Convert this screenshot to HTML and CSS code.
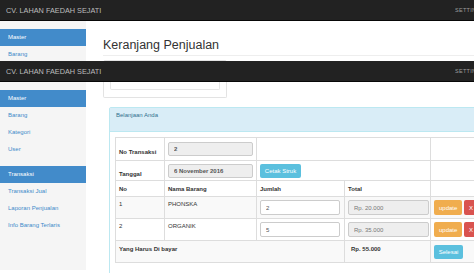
FILE: index.html
```html
<!DOCTYPE html>
<html lang="id">
<head>
    <meta charset="UTF-8">
    <meta name="viewport" content="width=device-width, initial-scale=1.0">
    <title>Keranjang Penjualan</title>
    <link rel="stylesheet" href="styles.css">
</head>
<body>

    <!-- upper strip (page before scroll) -->
    <div class="frame frame-top">
        <nav class="navbar">
            <span class="brand">CV. LAHAN FAEDAH SEJATI</span>
            <span class="nav-right">SETTINGS</span>
        </nav>
        <div class="layout">
            <aside class="sidebar">
                <ul class="nav-list">
                    <li class="active">Master</li>
                    <li>Barang</li>
                    <li>Kategori</li>
                    <li>User</li>
                </ul>
            </aside>
            <main class="content">
                <h1 class="page-header">Keranjang Penjualan</h1>
                <div class="outer-box">
                    <div class="inner-box"></div>
                </div>
            </main>
        </div>
    </div>

    <!-- lower part -->
    <div class="frame frame-bottom">
        <nav class="navbar">
            <span class="brand">CV. LAHAN FAEDAH SEJATI</span>
            <span class="nav-right">SETTINGS</span>
        </nav>
        <div class="layout">
            <aside class="sidebar">
                <ul class="nav-list">
                    <li class="active">Master</li>
                    <li>Barang</li>
                    <li>Kategori</li>
                    <li>User</li>
                </ul>
                <ul class="nav-list">
                    <li class="active">Transaksi</li>
                    <li>Transaksi Jual</li>
                    <li>Laporan Penjualan</li>
                    <li>Info Barang Terlaris</li>
                </ul>
            </aside>
            <main class="content">
                <div class="outer-box cut">
                    <div class="inner-box"></div>
                </div>

                <div class="panel">
                    <div class="panel-heading">Belanjaan Anda</div>
                    <div class="panel-body">
                        <table class="cart">
                            <colgroup>
                                <col style="width:49px">
                                <col style="width:92px">
                                <col style="width:88px">
                                <col style="width:86px">
                                <col style="width:60px">
                            </colgroup>
                            <tr class="r-no">
                                <th>No Transaksi</th>
                                <td><input class="field ro strong" type="text" value="2" readonly></td>
                                <td colspan="2" class="no-left"></td>
                                <td></td>
                            </tr>
                            <tr class="r-tgl">
                                <th>Tanggal</th>
                                <td><input class="field ro strong" type="text" value="6 November 2016" readonly></td>
                                <td colspan="2" class="no-left"><button class="btn btn-info btn-cetak">Cetak Struk</button></td>
                                <td></td>
                            </tr>
                            <tr class="r-head">
                                <th>No</th>
                                <th>Nama Barang</th>
                                <th>Jumlah</th>
                                <th>Total</th>
                                <th></th>
                            </tr>
                            <tr class="r-item stripe">
                                <td>1</td>
                                <td>PHONSKA</td>
                                <td><input class="field qty" type="text" value="2"></td>
                                <td><input class="field ro total" type="text" value="Rp. 20.000" readonly></td>
                                <td class="actions"><button class="btn btn-warning">update</button><button class="btn btn-danger">X</button></td>
                            </tr>
                            <tr class="r-item r-item2">
                                <td>2</td>
                                <td>ORGANIK</td>
                                <td><input class="field qty" type="text" value="5"></td>
                                <td><input class="field ro total" type="text" value="Rp. 35.000" readonly></td>
                                <td class="actions"><button class="btn btn-warning">update</button><button class="btn btn-danger">X</button></td>
                            </tr>
                            <tr class="r-foot stripe">
                                <th colspan="3">Yang Harus Di bayar</th>
                                <th class="grand">Rp. 55.000</th>
                                <td class="actions"><button class="btn btn-info btn-done">Selesai</button></td>
                            </tr>
                        </table>
                    </div>
                </div>
            </main>
        </div>
    </div>

</body>
</html>
```

FILE: styles.css
```css
* {
    margin: 0;
    padding: 0;
    box-sizing: border-box;
}

body {
    font-family: "Liberation Sans", Arial, sans-serif;
    font-size: 6px;
    color: #333;
    background: #fff;
    width: 474px;
    height: 273px;
    overflow: hidden;
}

.frame-top {
    height: 61px;
    overflow: hidden;
}

.navbar {
    display: flex;
    align-items: center;
    height: 21px;
    background: #222;
    border-bottom: 1px solid #080808;
    padding-left: 6px;
    overflow: hidden;
}

.brand {
    font-size: 7.3px;
    color: #bcbcbc;
    white-space: nowrap;
}

.nav-right {
    margin-left: auto;
    width: 19px;
    overflow: hidden;
    white-space: nowrap;
    font-size: 5.5px;
    color: #9d9d9d;
    letter-spacing: 0.3px;
}

.layout {
    display: flex;
}

.sidebar {
    width: 86px;
    flex-shrink: 0;
    background: #f5f5f5;
    padding-top: 8px;
}

.frame-bottom .sidebar {
    height: 188px;
}

.nav-list {
    list-style: none;
    margin-bottom: 8px;
}

.nav-list li {
    height: 17px;
    line-height: 17px;
    padding-left: 8px;
    color: #428bca;
    white-space: nowrap;
}

.nav-list li.active {
    background: #428bca;
    color: #fff;
}

.content {
    flex: 1;
    min-width: 0;
    padding-left: 17px;
}

.page-header {
    font-size: 12.5px;
    font-weight: normal;
    line-height: 14px;
    margin-top: 17px;
    padding-bottom: 3px;
    border-bottom: 1px solid #eee;
}

.outer-box {
    width: 124px;
    margin-top: 4px;
    padding: 6px;
    border: 1px solid #e3e3e3;
    border-radius: 2px;
}

.inner-box {
    height: 30px;
    border: 1px solid #e6e6e6;
    border-radius: 2px;
}

.outer-box.cut {
    margin-top: 0;
    height: 16px;
    padding: 0 6px 7px;
    border-top: 0;
    border-radius: 0 0 2px 2px;
}

.outer-box.cut .inner-box {
    height: 8px;
    border-top: 0;
    border-radius: 0 0 2px 2px;
}

.panel {
    width: 400px;
    margin: 9px 0 0 6px;
    border: 1px solid #bce8f1;
    border-radius: 2px;
}

.panel-heading {
    height: 24px;
    padding: 3px 6px;
    line-height: 8px;
    background: #d9edf7;
    color: #31708f;
    border-bottom: 1px solid #bce8f1;
}

.panel-body {
    padding: 5px 5px 24px;
}

.cart {
    width: 375px;
    table-layout: fixed;
    border-collapse: collapse;
}

.cart th, .cart td {
    border: 1px solid #ddd;
    padding: 3px;
    line-height: 8px;
    text-align: left;
    vertical-align: top;
    white-space: nowrap;
    overflow: hidden;
}

.cart th {
    font-weight: bold;
}

.cart .no-left {
    border-left-color: #fff;
}

.r-no { height: 23px; }
.r-tgl { height: 20px; }
.r-head { height: 16px; }
.r-item { height: 21px; }
.r-item2 { height: 22px; }
.r-foot { height: 21px; }

.r-no th, .r-no td {
    vertical-align: bottom;
    padding-bottom: 4px;
}

.r-tgl th, .r-tgl td {
    vertical-align: bottom;
    padding-bottom: 2px;
}

.r-head th {
    vertical-align: middle;
}

.r-foot th {
    padding-top: 4px;
}

.r-foot .grand {
    padding-left: 6px;
}

.stripe td, .stripe th {
    background: #f9f9f9;
}

.field {
    display: block;
    width: 100%;
    height: 14px;
    padding: 0 5px;
    border: 1px solid #ccc;
    border-radius: 2px;
    font-family: inherit;
    font-size: 6px;
    color: #555;
    background: #fff;
}

.field.ro {
    background: #eee;
}

.field.strong {
    font-weight: bold;
}

.field.qty, .field.total {
    height: 15px;
}

.field.qty {
    width: 80px;
}

.field.total {
    width: 81px;
    color: #777;
}

.btn {
    display: inline-block;
    height: 14px;
    line-height: 14px;
    padding: 0 5px;
    border: 0;
    border-radius: 2px;
    font-family: inherit;
    font-size: 6px;
    color: #fff;
    vertical-align: top;
}

.btn-info {
    background: #5bc0de;
}

.btn-warning {
    background: #f0ad4e;
    width: 28px;
    height: 15px;
}

.btn-danger {
    background: #d9534f;
    height: 15px;
    margin-left: 2px;
    padding: 0 5px;
}

.btn-cetak {
    width: 41px;
    padding: 0;
}

.btn-done {
    width: 29px;
    padding: 0;
    margin-top: 1px;
}

.actions {
    overflow: visible;
}
```
